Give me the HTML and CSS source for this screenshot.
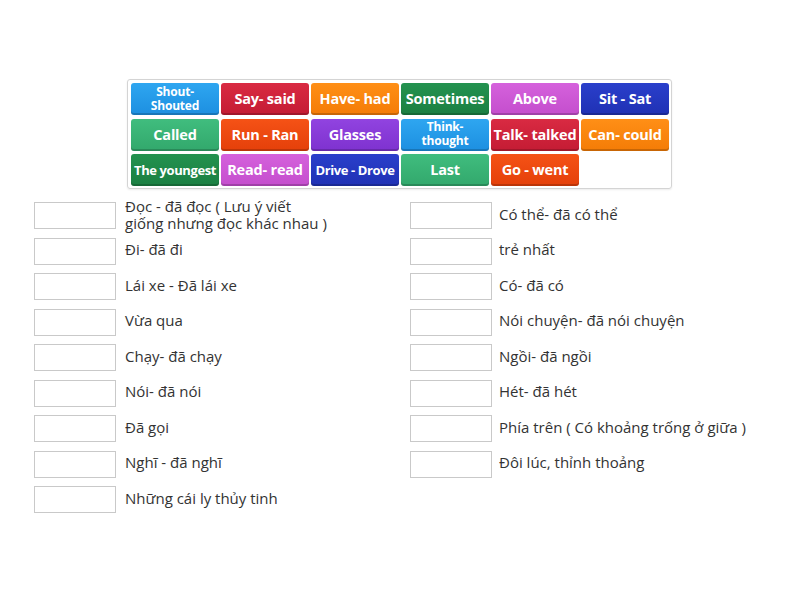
FILE: index.html
```html
<!DOCTYPE html>
<html lang="vi">
<head>
<meta charset="utf-8">
<link rel="stylesheet" href="styles.css">
</head>
<body>
<div class="page">
  <div class="bank">
    <div class="tile blue two"><span>Shout-</span><span>Shouted</span></div>
    <div class="tile red">Say- said</div>
    <div class="tile orange">Have- had</div>
    <div class="tile dgreen">Sometimes</div>
    <div class="tile orchid">Above</div>
    <div class="tile dblue">Sit - Sat</div>
    <div class="tile green">Called</div>
    <div class="tile ored">Run - Ran</div>
    <div class="tile purple">Glasses</div>
    <div class="tile blue two"><span>Think-</span><span>thought</span></div>
    <div class="tile red">Talk- talked</div>
    <div class="tile orange">Can- could</div>
    <div class="tile dgreen small">The youngest</div>
    <div class="tile orchid">Read- read</div>
    <div class="tile dblue small">Drive - Drove</div>
    <div class="tile green">Last</div>
    <div class="tile ored">Go - went</div>
  </div>

  <div class="answers">
    <div class="col left">
      <div class="row"><div class="box"></div><div class="label">Đọc - đã đọc ( Lưu ý viết giống nhưng đọc khác nhau )</div></div>
      <div class="row"><div class="box"></div><div class="label">Đi- đã đi</div></div>
      <div class="row"><div class="box"></div><div class="label">Lái xe - Đã lái xe</div></div>
      <div class="row"><div class="box"></div><div class="label">Vừa qua</div></div>
      <div class="row"><div class="box"></div><div class="label">Chạy- đã chạy</div></div>
      <div class="row"><div class="box"></div><div class="label">Nói- đã nói</div></div>
      <div class="row"><div class="box"></div><div class="label">Đã gọi</div></div>
      <div class="row"><div class="box"></div><div class="label">Nghĩ - đã nghĩ</div></div>
      <div class="row"><div class="box"></div><div class="label">Những cái ly thủy tinh</div></div>
    </div>
    <div class="col right">
      <div class="row"><div class="box"></div><div class="label">Có thể- đã có thể</div></div>
      <div class="row"><div class="box"></div><div class="label">trẻ nhất</div></div>
      <div class="row"><div class="box"></div><div class="label">Có- đã có</div></div>
      <div class="row"><div class="box"></div><div class="label">Nói chuyện- đã nói chuyện</div></div>
      <div class="row"><div class="box"></div><div class="label">Ngồi- đã ngồi</div></div>
      <div class="row"><div class="box"></div><div class="label">Hét- đã hét</div></div>
      <div class="row"><div class="box"></div><div class="label">Phía trên ( Có khoảng trống ở giữa )</div></div>
      <div class="row"><div class="box"></div><div class="label">Đôi lúc, thỉnh thoảng</div></div>
    </div>
  </div>
</div>
</body>
</html>
```

FILE: styles.css
```css
html, body {
  margin: 0;
  padding: 0;
  background: #ffffff;
  font-family: "Open Sans", "Liberation Sans", sans-serif;
}

.page {
  width: 800px;
  height: 600px;
  padding-top: 79px;
  box-sizing: border-box;
}

.bank {
  width: 538px;
  margin: 0 0 0 127px;
  border: 1px solid #d4d4d4;
  border-radius: 3px;
  padding: 3px 2px 2px 3px;
  display: grid;
  grid-template-columns: repeat(6, 88px);
  grid-auto-rows: 32px;
  column-gap: 2px;
  row-gap: 3.5px;
  box-shadow: 0 1px 2px rgba(0,0,0,0.08);
}

.tile {
  border-radius: 3px;
  color: #ffffff;
  font-weight: 700;
  font-size: 14.5px;
  line-height: 16px;
  display: flex;
  align-items: center;
  justify-content: center;
  text-align: center;
  white-space: nowrap;
  letter-spacing: -0.2px;
  box-shadow: inset 0 -2px 0 rgba(0,0,0,0.18);
}

.tile.two {
  flex-direction: column;
  font-size: 12px;
  line-height: 14px;
  padding-bottom: 1px;
}

.tile.two span {
  display: block;
  height: 14px;
}

.tile.small {
  font-size: 13px;
  letter-spacing: -0.4px;
}

.blue   { background: linear-gradient(#2ea6f0, #1d8fe0); }
.red    { background: linear-gradient(#d92a42, #c41c34); }
.orange { background: linear-gradient(#ff8f16, #f47c06); }
.dgreen { background: linear-gradient(#23924f, #1b7f42); }
.orchid { background: linear-gradient(#d561dc, #c44ecd); }
.dblue  { background: linear-gradient(#2a3fcb, #1f31b4); }
.green  { background: linear-gradient(#40bd7e, #32a86c); }
.ored   { background: linear-gradient(#f55216, #e4400a); }
.purple { background: linear-gradient(#9143e0, #7e32cf); }

.answers {
  display: grid;
  grid-template-columns: 376px 376px;
  padding-left: 34px;
  margin-top: 13px;
}

.col {
  display: flex;
  flex-direction: column;
  gap: 8.5px;
}

.row {
  display: flex;
  align-items: center;
  height: 27px;
}

.box {
  flex: 0 0 auto;
  width: 80px;
  height: 25px;
  border: 1px solid #c9c9c9;
  background: #ffffff;
}

.label {
  margin-left: 9px;
  font-size: 15px;
  line-height: 17px;
  color: #333333;
  margin-top: -3px;
}

.left .label {
  max-width: 205px;
}

.left .row:first-child .label {
  margin-top: -2px;
}

.right .label {
  margin-left: 7px;
}
```
